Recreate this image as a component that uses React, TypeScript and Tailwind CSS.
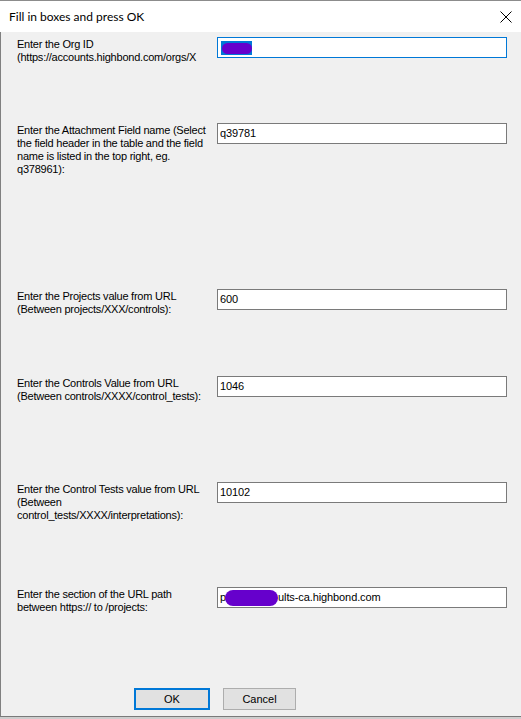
import React from "react";

const labelFont = { fontFamily: '"Liberation Sans", Arial, sans-serif' };

function Field({
  h,
  lines,
  children,
  focused,
}: {
  h: string;
  lines: string[];
  children: React.ReactNode;
  focused?: boolean;
}) {
  return (
    <div className={`flex items-start ${h}`}>
      <div className="w-[216px] pl-[16px] pt-[1px] text-[11px] leading-[13px] tracking-[-0.23px] text-black">
        {lines.map((l, i) => (
          <div key={i} className="whitespace-nowrap">
            {l}
          </div>
        ))}
      </div>
      <div
        className={`w-[290px] h-[21px] bg-white flex items-center pl-[2px] text-[11px] tracking-[-0.1px] text-black ${
          focused ? "border border-[#0078d7]" : "border border-[#7a7a7a]"
        }`}
      >
        {children}
      </div>
    </div>
  );
}

export default function App() {
  return (
    <div className="w-[521px] h-[719px] flex flex-col overflow-hidden bg-[#f0f0f0]" style={labelFont}>
      <div className="h-px bg-[#8c8c8c]" />
      <div
        className="h-[31px] bg-white flex items-center justify-between pl-[9px] pr-[9px] text-[12px] text-black"
        style={{ fontFamily: 'Lato, "Noto Sans", sans-serif' }}
      >
        <span>Fill in boxes and press OK</span>
        <svg width="12" height="12" viewBox="0 0 12 12">
          <path d="M0.5 0.5 L11.5 11.5 M11.5 0.5 L0.5 11.5" stroke="#000" strokeWidth="1" />
        </svg>
      </div>
      <div className="flex-1 flex flex-col pt-[5px] border-l border-[#808080]">
        <Field h="h-[86px]" focused lines={["Enter the Org ID", "(https://accounts.highbond.com/orgs/X"]}>
          <div className="relative ml-[1px] w-[31px] h-[14px] bg-[#0078d7]">
            <div className="absolute left-[1px] top-[2px] w-[30px] h-[11px] rounded-full bg-[#6600cc]" />
          </div>
        </Field>
        <Field
          h="h-[166px]"
          lines={[
            "Enter the Attachment Field name (Select",
            "the field header in the table and the field",
            "name is listed in the top right, eg.",
            "q378961):",
          ]}
        >
          q39781
        </Field>
        <Field h="h-[87px]" lines={["Enter the Projects value from URL", "(Between projects/XXX/controls):"]}>
          600
        </Field>
        <Field h="h-[106px]" lines={["Enter the Controls Value from URL", "(Between controls/XXXX/control_tests):"]}>
          1046
        </Field>
        <Field
          h="h-[105px]"
          lines={["Enter the Control Tests value from URL", "(Between", "control_tests/XXXX/interpretations):"]}
        >
          10102
        </Field>
        <Field h="h-[101px]" lines={["Enter the section of the URL path", "between https:// to /projects:"]}>
          <span>p</span>
          <span className="inline-block w-[53px] h-[16px] rounded-[8px] bg-[#6600cc] -ml-[1px]" />
          <span>ults-ca.highbond.com</span>
        </Field>
        <div className="flex pl-[133px] gap-[13px] text-[11px] text-black">
          <button className="w-[76px] h-[22px] border-2 border-[#0078d7] bg-[#e1e1e1] flex items-center justify-center">
            OK
          </button>
          <button className="w-[73px] h-[22px] border border-[#adadad] bg-[#e1e1e1] flex items-center justify-center">
            Cancel
          </button>
        </div>
      </div>
      <div className="h-px bg-[#7a7a7a]" />
      <div className="h-[2px] bg-[#cdcdcd]" />
    </div>
  );
}
